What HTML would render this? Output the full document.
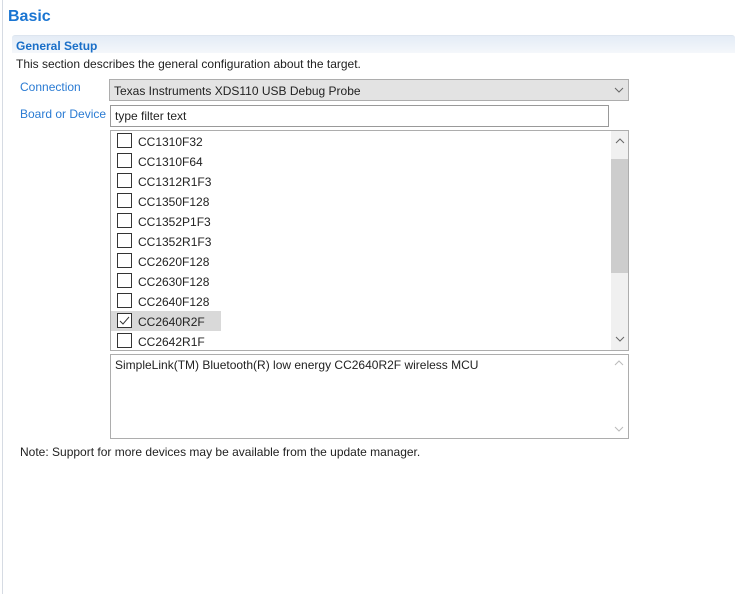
<!DOCTYPE html>
<html><head><meta charset="utf-8"><style>
*{box-sizing:border-box;margin:0;padding:0}
body{width:742px;height:594px;background:#fff;font-family:"Liberation Sans",sans-serif;font-size:12px;color:#222;position:relative;overflow:hidden}
.a{position:absolute}
.lbl{color:#2a7bd3}
.cb{position:absolute;left:6px;width:15px;height:15px;border:1px solid #333;background:#fff}
.row{position:absolute;left:0;height:20px;width:110px}
.row span{position:absolute;left:27px;top:4px}
</style></head><body>
<div class="a" style="left:2px;top:0;width:1px;height:594px;background:#d6dbe3"></div>
<div class="a" style="left:8px;top:8px;font-size:16px;font-weight:bold;color:#1a75d2">Basic</div>
<div class="a" style="left:12px;top:35px;width:723px;height:18px;background:linear-gradient(#e4ecf6,#f4f7fb);border-top:1px solid #dde5ef;border-radius:3px 3px 0 0"></div>
<div class="a" style="left:16px;top:39px;font-weight:bold;color:#1a6fc8">General Setup</div>
<div class="a" style="left:16px;top:57px">This section describes the general configuration about the target.</div>
<div class="a lbl" style="left:20px;top:80px">Connection</div>
<div class="a" style="left:109px;top:79px;width:520px;height:22px;background:#e3e3e3;border:1px solid #adadad"></div>
<div class="a" style="left:114px;top:84px">Texas Instruments XDS110 USB Debug Probe</div>
<svg class="a" style="left:614px;top:86px" width="10" height="8"><path d="M1 2l4 4 4-4" fill="none" stroke="#666" stroke-width="1"/></svg>
<div class="a lbl" style="left:20px;top:107px">Board or Device</div>
<div class="a" style="left:110px;top:105px;width:499px;height:22px;border:1px solid #999"></div>
<div class="a" style="left:115px;top:109px">type filter text</div>
<div class="a" style="left:110px;top:130px;width:519px;height:221px;border:1px solid #adadad;overflow:hidden">
 <div class="a" style="left:500px;top:0;width:17px;height:219px;background:#f0f0f0"></div>
 <div class="a" style="left:500px;top:28px;width:17px;height:114px;background:#cdcdcd"></div>
 <svg class="a" style="left:504px;top:6px" width="10" height="8"><path d="M1 6l4-4 4 4" fill="none" stroke="#666"/></svg>
 <svg class="a" style="left:504px;top:204px" width="10" height="8"><path d="M1 2l4 4 4-4" fill="none" stroke="#666"/></svg>
 <div class="row" style="top:0"><div class="cb" style="top:2px"></div><span>CC1310F32</span></div>
 <div class="row" style="top:20px"><div class="cb" style="top:2px"></div><span>CC1310F64</span></div>
 <div class="row" style="top:40px"><div class="cb" style="top:2px"></div><span>CC1312R1F3</span></div>
 <div class="row" style="top:60px"><div class="cb" style="top:2px"></div><span>CC1350F128</span></div>
 <div class="row" style="top:80px"><div class="cb" style="top:2px"></div><span>CC1352P1F3</span></div>
 <div class="row" style="top:100px"><div class="cb" style="top:2px"></div><span>CC1352R1F3</span></div>
 <div class="row" style="top:120px"><div class="cb" style="top:2px"></div><span>CC2620F128</span></div>
 <div class="row" style="top:140px"><div class="cb" style="top:2px"></div><span>CC2630F128</span></div>
 <div class="row" style="top:160px"><div class="cb" style="top:2px"></div><span>CC2640F128</span></div>
 <div class="row" style="top:180px;background:#d9d9d9"><div class="cb" style="top:2px;background:#fff"><svg width="13" height="13" style="position:absolute;left:0;top:0"><path d="M2 7l3 3 6-7" fill="none" stroke="#333"/></svg></div><span>CC2640R2F</span></div>
 <div class="row" style="top:200px"><div class="cb" style="top:2px"></div><span>CC2642R1F</span></div>
</div>
<div class="a" style="left:110px;top:354px;width:519px;height:85px;border:1px solid #adadad"></div>
<svg class="a" style="left:614px;top:359px" width="10" height="8"><path d="M1 6l4-4 4 4" fill="none" stroke="#bbb"/></svg>
<svg class="a" style="left:614px;top:425px" width="10" height="8"><path d="M1 2l4 4 4-4" fill="none" stroke="#bbb"/></svg>
<div class="a" style="left:115px;top:358px">SimpleLink(TM) Bluetooth(R) low energy CC2640R2F wireless MCU</div>
<div class="a" style="left:20px;top:445px">Note: Support for more devices may be available from the update manager.</div>
</body></html>
